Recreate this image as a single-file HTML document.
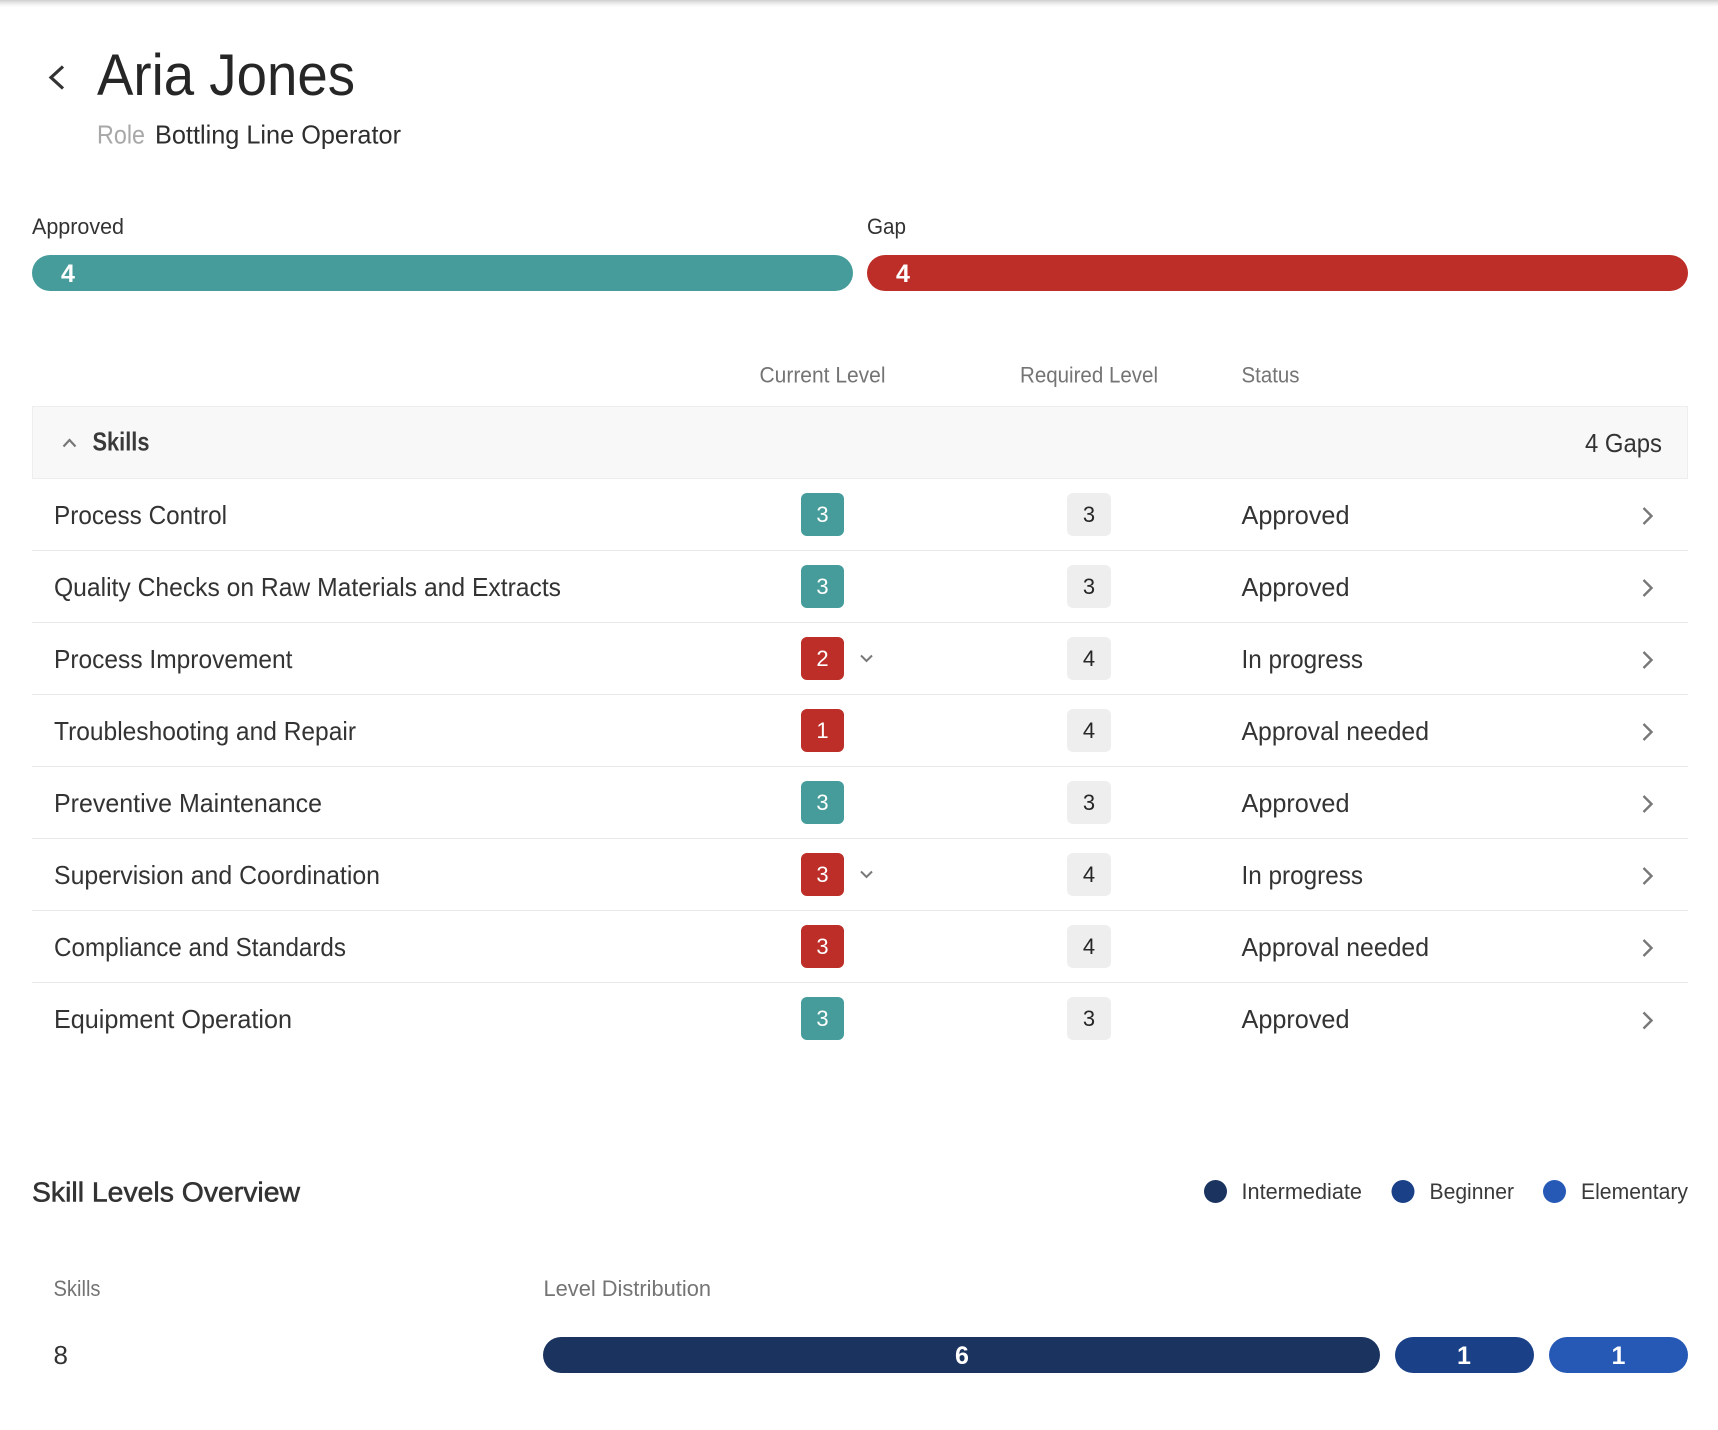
<!DOCTYPE html>
<html lang="en">
<head>
<meta charset="utf-8">
<title>Aria Jones</title>
<style>
html,body{margin:0;padding:0;background:#fff;width:1718px;height:1430px;overflow:hidden}
svg{display:block;position:absolute;left:0;top:0}
text{font-family:"Liberation Sans",sans-serif;fill:#333}
.row{font-size:26px;fill:#333}
.hd{font-size:22px;fill:#747474}
.lg{font-size:22px;fill:#3a3a3a}
.bd{font-size:22px;text-anchor:middle;fill:#fff}
.bg{font-size:22px;text-anchor:middle;fill:#262626}
.bar{font-size:25px;font-weight:bold;fill:#fff;text-anchor:middle}
.rc{fill:none;stroke:#787878;stroke-width:2.4}
.dc{fill:none;stroke:#787878;stroke-width:2}
</style>
</head>
<body>
<svg width="1718" height="1430" viewBox="0 0 1718 1430" xmlns="http://www.w3.org/2000/svg">
<defs><linearGradient id="top" x1="0" y1="0" x2="0" y2="1"><stop offset="0" stop-color="#cfcfcf"/><stop offset="0.5" stop-color="#ececec"/><stop offset="1" stop-color="#ffffff"/></linearGradient></defs>
<rect width="1718" height="1430" fill="#fff"/>
<rect width="1718" height="7" fill="url(#top)"/>

<path d="M63 66.5 L51 77.5 L63 88.5" fill="none" stroke="#333" stroke-width="3.2"/>
<text x="97" y="95" font-size="58" textLength="258" lengthAdjust="spacingAndGlyphs" style="fill:#262626">Aria Jones</text>
<text x="97" y="143.5" font-size="26" textLength="48" lengthAdjust="spacingAndGlyphs" style="fill:#a8a8a8">Role</text>
<text x="155" y="143.5" font-size="26" textLength="246" lengthAdjust="spacingAndGlyphs" style="fill:#2e2e2e">Bottling Line Operator</text>

<text x="32" y="234" font-size="22" textLength="92" lengthAdjust="spacingAndGlyphs">Approved</text>
<text x="867" y="234" font-size="22" textLength="39" lengthAdjust="spacingAndGlyphs">Gap</text>
<rect x="32" y="255" width="821" height="36" rx="18" fill="#459c9a"/>
<rect x="867" y="255" width="821" height="36" rx="18" fill="#bd2e28"/>
<text class="bar" x="68" y="282">4</text>
<text class="bar" x="903" y="282">4</text>

<text class="hd" x="759.5" y="382.5" textLength="126" lengthAdjust="spacingAndGlyphs">Current Level</text>
<text class="hd" x="1020" y="382.5" textLength="138" lengthAdjust="spacingAndGlyphs">Required Level</text>
<text class="hd" x="1241.5" y="382.5" textLength="58" lengthAdjust="spacingAndGlyphs">Status</text>

<rect x="32.5" y="406.5" width="1655" height="72" fill="#f8f8f8" stroke="#eeeeee"/>
<path d="M63.5 446.5 L69.5 440 L75.5 446.5" class="rc" style="stroke-width:2.2"/>
<text x="92.5" y="450.5" font-size="26" font-weight="bold" textLength="57" lengthAdjust="spacingAndGlyphs" style="fill:#3a3a3a">Skills</text>
<text x="1585" y="452" font-size="26" textLength="77" lengthAdjust="spacingAndGlyphs">4 Gaps</text>

<g fill="#e9e9e9">
<rect x="32" y="550" width="1656" height="1"/>
<rect x="32" y="622" width="1656" height="1"/>
<rect x="32" y="694" width="1656" height="1"/>
<rect x="32" y="766" width="1656" height="1"/>
<rect x="32" y="838" width="1656" height="1"/>
<rect x="32" y="910" width="1656" height="1"/>
<rect x="32" y="982" width="1656" height="1"/>
</g>

<!-- Row 1 -->
<text class="row" x="54" y="524" textLength="173" lengthAdjust="spacingAndGlyphs">Process Control</text>
<rect x="801" y="493" width="43" height="43" rx="6" fill="#459c9a"/><text class="bd" x="822.5" y="522">3</text>
<rect x="1067" y="493" width="44" height="43" rx="6" fill="#eeeeee"/><text class="bg" x="1089" y="522">3</text>
<text class="row" x="1241.5" y="524" textLength="108" lengthAdjust="spacingAndGlyphs">Approved</text>
<path class="rc" d="M1643.5 508 L1651.5 516 L1643.5 524"/>

<!-- Row 2 -->
<text class="row" x="54" y="596" textLength="507" lengthAdjust="spacingAndGlyphs">Quality Checks on Raw Materials and Extracts</text>
<rect x="801" y="565" width="43" height="43" rx="6" fill="#459c9a"/><text class="bd" x="822.5" y="594">3</text>
<rect x="1067" y="565" width="44" height="43" rx="6" fill="#eeeeee"/><text class="bg" x="1089" y="594">3</text>
<text class="row" x="1241.5" y="596" textLength="108" lengthAdjust="spacingAndGlyphs">Approved</text>
<path class="rc" d="M1643.5 580 L1651.5 588 L1643.5 596"/>

<!-- Row 3 -->
<text class="row" x="54" y="668" textLength="238.5" lengthAdjust="spacingAndGlyphs">Process Improvement</text>
<rect x="801" y="637" width="43" height="43" rx="6" fill="#bd2e28"/><text class="bd" x="822.5" y="666">2</text>
<path class="dc" d="M861 655.5 L866.5 661 L872 655.5"/>
<rect x="1067" y="637" width="44" height="43" rx="6" fill="#eeeeee"/><text class="bg" x="1089" y="666">4</text>
<text class="row" x="1241.5" y="668" textLength="121.5" lengthAdjust="spacingAndGlyphs">In progress</text>
<path class="rc" d="M1643.5 652 L1651.5 660 L1643.5 668"/>

<!-- Row 4 -->
<text class="row" x="54" y="740" textLength="302" lengthAdjust="spacingAndGlyphs">Troubleshooting and Repair</text>
<rect x="801" y="709" width="43" height="43" rx="6" fill="#bd2e28"/><text class="bd" x="822.5" y="738">1</text>
<rect x="1067" y="709" width="44" height="43" rx="6" fill="#eeeeee"/><text class="bg" x="1089" y="738">4</text>
<text class="row" x="1241.5" y="740" textLength="187.5" lengthAdjust="spacingAndGlyphs">Approval needed</text>
<path class="rc" d="M1643.5 724 L1651.5 732 L1643.5 740"/>

<!-- Row 5 -->
<text class="row" x="54" y="812" textLength="268" lengthAdjust="spacingAndGlyphs">Preventive Maintenance</text>
<rect x="801" y="781" width="43" height="43" rx="6" fill="#459c9a"/><text class="bd" x="822.5" y="810">3</text>
<rect x="1067" y="781" width="44" height="43" rx="6" fill="#eeeeee"/><text class="bg" x="1089" y="810">3</text>
<text class="row" x="1241.5" y="812" textLength="108" lengthAdjust="spacingAndGlyphs">Approved</text>
<path class="rc" d="M1643.5 796 L1651.5 804 L1643.5 812"/>

<!-- Row 6 -->
<text class="row" x="54" y="884" textLength="326" lengthAdjust="spacingAndGlyphs">Supervision and Coordination</text>
<rect x="801" y="853" width="43" height="43" rx="6" fill="#bd2e28"/><text class="bd" x="822.5" y="882">3</text>
<path class="dc" d="M861 871.5 L866.5 877 L872 871.5"/>
<rect x="1067" y="853" width="44" height="43" rx="6" fill="#eeeeee"/><text class="bg" x="1089" y="882">4</text>
<text class="row" x="1241.5" y="884" textLength="121.5" lengthAdjust="spacingAndGlyphs">In progress</text>
<path class="rc" d="M1643.5 868 L1651.5 876 L1643.5 884"/>

<!-- Row 7 -->
<text class="row" x="54" y="956" textLength="292" lengthAdjust="spacingAndGlyphs">Compliance and Standards</text>
<rect x="801" y="925" width="43" height="43" rx="6" fill="#bd2e28"/><text class="bd" x="822.5" y="954">3</text>
<rect x="1067" y="925" width="44" height="43" rx="6" fill="#eeeeee"/><text class="bg" x="1089" y="954">4</text>
<text class="row" x="1241.5" y="956" textLength="187.5" lengthAdjust="spacingAndGlyphs">Approval needed</text>
<path class="rc" d="M1643.5 940 L1651.5 948 L1643.5 956"/>

<!-- Row 8 -->
<text class="row" x="54" y="1028" textLength="238" lengthAdjust="spacingAndGlyphs">Equipment Operation</text>
<rect x="801" y="997" width="43" height="43" rx="6" fill="#459c9a"/><text class="bd" x="822.5" y="1026">3</text>
<rect x="1067" y="997" width="44" height="43" rx="6" fill="#eeeeee"/><text class="bg" x="1089" y="1026">3</text>
<text class="row" x="1241.5" y="1028" textLength="108" lengthAdjust="spacingAndGlyphs">Approved</text>
<path class="rc" d="M1643.5 1012.5 L1651.5 1020.5 L1643.5 1028.5"/>

<!-- Overview -->
<text x="32" y="1201.5" font-size="28" textLength="268" lengthAdjust="spacingAndGlyphs" style="fill:#333;stroke:#333;stroke-width:.55">Skill Levels Overview</text>

<circle cx="1215.5" cy="1191.5" r="11.5" fill="#1a335f"/>
<text class="lg" x="1241.5" y="1199" textLength="120.5" lengthAdjust="spacingAndGlyphs">Intermediate</text>
<circle cx="1403" cy="1191.5" r="11.5" fill="#1a4088"/>
<text class="lg" x="1429.5" y="1199" textLength="84.5" lengthAdjust="spacingAndGlyphs">Beginner</text>
<circle cx="1554.5" cy="1191.5" r="11.5" fill="#2559b5"/>
<text class="lg" x="1581" y="1199" textLength="107" lengthAdjust="spacingAndGlyphs">Elementary</text>

<text class="hd" x="53.5" y="1296" textLength="47" lengthAdjust="spacingAndGlyphs">Skills</text>
<text class="hd" x="543.5" y="1296" textLength="167.5" lengthAdjust="spacingAndGlyphs">Level Distribution</text>
<text x="53.5" y="1364" font-size="26" style="fill:#333">8</text>

<rect x="543" y="1337" width="837" height="36" rx="18" fill="#1a335f"/>
<rect x="1395" y="1337" width="139" height="36" rx="18" fill="#1a4088"/>
<rect x="1549" y="1337" width="139" height="36" rx="18" fill="#2559b5"/>
<text class="bar" x="962" y="1364">6</text>
<text class="bar" x="1464" y="1364">1</text>
<text class="bar" x="1618.5" y="1364">1</text>
</svg>
</body>
</html>
